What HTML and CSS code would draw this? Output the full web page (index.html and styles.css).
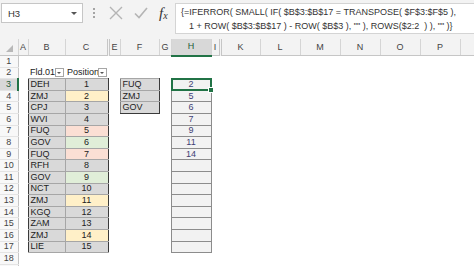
FILE: index.html
```html
<!DOCTYPE html>
<html>
<head>
    <title>Sheet</title>
    <link rel="stylesheet" href="styles.css">
</head>
<body>
    <div class="formula-bar">
        <div class="name-box">
            <span>H3</span>
            <span class="name-arrow"></span>
        </div>
        <svg class="grip" width="20" height="20" viewBox="0 0 20 20">
            <circle cx="10" cy="6" r="1" fill="#8a8a8a"/>
            <circle cx="10" cy="10" r="1" fill="#8a8a8a"/>
            <circle cx="10" cy="14" r="1" fill="#8a8a8a"/>
        </svg>
        <div class="fx-buttons">
            <svg class="btn-x" width="16" height="16" viewBox="0 0 16 16">
                <path d="M2 2 L14 14 M14 2 L2 14" stroke="#b4b4b4" stroke-width="1.4" fill="none"/>
            </svg>
            <svg class="btn-check" width="16" height="16" viewBox="0 0 16 16">
                <path d="M2 8.5 L6 12.5 L14 3" stroke="#b4b4b4" stroke-width="1.6" fill="none"/>
            </svg>
            <span class="fx">f<sub>x</sub></span>
        </div>
        <div class="formula">
            <div>{=IFERROR( SMALL( IF( $B$3:$B$17 = TRANSPOSE( $F$3:$F$5 ),</div>
            <div class="indent">1 + ROW( $B$3:$B$17 ) - ROW( $B$3 ), "" ), ROWS($2:2&nbsp; ) ), "" )}</div>
        </div>
    </div>

    <table class="sheet">
        <colgroup>
            <col style="width:18px"><col style="width:10px"><col style="width:37px"><col style="width:43px">
            <col style="width:12px"><col style="width:39px"><col style="width:12px"><col style="width:40px">
            <col style="width:9px"><col style="width:40px"><col style="width:40px"><col style="width:40px">
            <col style="width:40px"><col style="width:40px"><col style="width:40px"><col style="width:14px">
        </colgroup>
        <tr class="col-head">
            <th class="corner"><span class="tri"></span></th>
            <th>A</th><th>B</th><th>C</th><th class="hid">E</th><th>F</th><th>G</th>
            <th class="on">H</th><th>I</th><th class="hid">K</th><th>L</th><th>M</th>
            <th>N</th><th>O</th><th>P</th><th></th>
        </tr>
        <tr><th class="rn">1</th><td></td><td></td><td></td><td></td><td></td><td></td><td></td><td colspan="8"></td></tr>
        <tr><th class="rn">2</th><td></td>
            <td class="hdr">Fld.01<span class="filter"></span></td>
            <td class="hdr">Position<span class="filter"></span></td>
            <td></td><td></td><td></td><td></td><td colspan="8"></td></tr>
        <tr><th class="rn on">3</th><td></td><td class="fld">DEH</td><td class="pos">1</td><td></td><td class="key">FUQ</td><td></td><td class="out sel">2</td><td colspan="8"></td></tr>
        <tr><th class="rn">4</th><td></td><td class="fld">ZMJ</td><td class="pos y">2</td><td></td><td class="key">ZMJ</td><td></td><td class="out">5</td><td colspan="8"></td></tr>
        <tr><th class="rn">5</th><td></td><td class="fld">CPJ</td><td class="pos">3</td><td></td><td class="key last">GOV</td><td></td><td class="out">6</td><td colspan="8"></td></tr>
        <tr><th class="rn">6</th><td></td><td class="fld">WVI</td><td class="pos">4</td><td></td><td></td><td></td><td class="out">7</td><td colspan="8"></td></tr>
        <tr><th class="rn">7</th><td></td><td class="fld">FUQ</td><td class="pos r">5</td><td></td><td></td><td></td><td class="out">9</td><td colspan="8"></td></tr>
        <tr><th class="rn">8</th><td></td><td class="fld">GOV</td><td class="pos g">6</td><td></td><td></td><td></td><td class="out">11</td><td colspan="8"></td></tr>
        <tr><th class="rn">9</th><td></td><td class="fld">FUQ</td><td class="pos r">7</td><td></td><td></td><td></td><td class="out">14</td><td colspan="8"></td></tr>
        <tr><th class="rn">10</th><td></td><td class="fld">RFH</td><td class="pos">8</td><td></td><td></td><td></td><td class="out"></td><td colspan="8"></td></tr>
        <tr><th class="rn">11</th><td></td><td class="fld">GOV</td><td class="pos g">9</td><td></td><td></td><td></td><td class="out"></td><td colspan="8"></td></tr>
        <tr><th class="rn">12</th><td></td><td class="fld">NCT</td><td class="pos">10</td><td></td><td></td><td></td><td class="out"></td><td colspan="8"></td></tr>
        <tr><th class="rn">13</th><td></td><td class="fld">ZMJ</td><td class="pos y">11</td><td></td><td></td><td></td><td class="out"></td><td colspan="8"></td></tr>
        <tr><th class="rn">14</th><td></td><td class="fld">KGQ</td><td class="pos">12</td><td></td><td></td><td></td><td class="out"></td><td colspan="8"></td></tr>
        <tr><th class="rn">15</th><td></td><td class="fld">ZAM</td><td class="pos">13</td><td></td><td></td><td></td><td class="out"></td><td colspan="8"></td></tr>
        <tr><th class="rn">16</th><td></td><td class="fld">ZMJ</td><td class="pos y">14</td><td></td><td></td><td></td><td class="out"></td><td colspan="8"></td></tr>
        <tr><th class="rn">17</th><td></td><td class="fld last">LIE</td><td class="pos last">15</td><td></td><td></td><td></td><td class="out"></td><td colspan="8"></td></tr>
        <tr><th class="rn">18</th><td></td><td></td><td></td><td></td><td></td><td></td><td></td><td colspan="8"></td></tr>
        <tr><th class="rn"></th><td></td><td></td><td></td><td></td><td></td><td></td><td></td><td colspan="8"></td></tr>
    </table>
</body>
</html>
```

FILE: styles.css
```css
body {
    margin: 0;
    width: 474px;
    height: 266px;
    overflow: hidden;
    background-color: #fff;
    font-family: "Liberation Sans", Arial, sans-serif;
    font-size: 9px;
    color: #262626;
}

/* Formula bar */
.formula-bar {
    display: flex;
    align-items: flex-start;
    height: 39px;
    padding-top: 3px;
    box-sizing: border-box;
    background-color: #f3f3f3;
}

.name-box {
    display: flex;
    align-items: center;
    justify-content: space-between;
    width: 82px;
    height: 20px;
    margin-left: 1px;
    padding: 0 5px 0 6px;
    box-sizing: border-box;
    border: 1px solid #c6c6c6;
    background-color: #fff;
    font-size: 9.5px;
    color: #333;
}

.name-arrow {
    border-top: 3px solid #555;
    border-left: 3px solid transparent;
    border-right: 3px solid transparent;
}

.grip {
    margin-left: 1px;
}

.fx-buttons {
    display: flex;
    align-items: center;
    width: 71px;
    height: 20px;
}

.btn-x {
    margin-left: 4px;
}

.btn-check {
    margin-left: 9px;
}

.fx {
    margin-left: 10px;
    font-family: "Liberation Serif", "Times New Roman", serif;
    font-style: italic;
    font-size: 15px;
    color: #333;
}

.fx sub {
    font-size: 10px;
    vertical-align: -1px;
}

.formula {
    flex: 1;
    height: 31px;
    padding: 1px 5px 0;
    box-sizing: border-box;
    border: 1px solid #d4d4d4;
    border-right: none;
    background-color: #fff;
    line-height: 14px;
    color: #333;
    white-space: nowrap;
    overflow: hidden;
}

.formula .indent {
    padding-left: 8px;
}

/* Sheet grid */
.sheet {
    width: 474px;
    table-layout: fixed;
    border-collapse: collapse;
}

.sheet tr {
    height: 11.6px;
}

.sheet tr.col-head {
    height: 16.5px;
}

.sheet td,
.sheet th {
    padding: 0;
    line-height: 9px;
    font-weight: normal;
    white-space: nowrap;
    overflow: visible;
}

.col-head th {
    background-color: #f3f3f3;
    border-right: 1px solid #d5d5d5;
    border-bottom: 1px solid #c6c6c6;
    text-align: center;
    color: #444;
}

.col-head th.hid {
    border-left: 3px double #c6c6c6;
}

.col-head th.on {
    background-color: #d8d8d8;
    border-bottom: 2px solid #217346;
    color: #1e5b38;
}

.col-head th.corner {
    position: relative;
}

.tri {
    position: absolute;
    right: 5px;
    bottom: 3px;
    border-bottom: 7px solid #b8b8b8;
    border-left: 7px solid transparent;
}

.rn {
    background-color: #f8f8f8;
    border-right: 1px solid #c6c6c6;
    border-bottom: 1px solid #e4e4e4;
    text-align: center;
    color: #444;
}

.rn.on {
    background-color: #d8d8d8;
    border-right: 2px solid #217346;
    color: #1e5b38;
}

.hdr {
    position: relative;
    padding-left: 2px !important;
    color: #222;
}

.filter {
    position: absolute;
    right: 1px;
    top: 1px;
    width: 7px;
    height: 7px;
    border: 1px solid #a6a6a6;
    background-color: #fff;
}

.filter::after {
    content: "";
    position: absolute;
    left: 1px;
    top: 3px;
    border-top: 2.5px solid #555;
    border-left: 2.5px solid transparent;
    border-right: 2.5px solid transparent;
}

.fld,
.pos,
.key {
    background-color: #d9d9d9;
    border: 1px solid #a6a6a6;
    color: #222;
}

.fld,
.key {
    padding-left: 2px !important;
}

.fld {
    border-left: 1px solid #3a3a3a;
}

.pos {
    border-right: 1px solid #3a3a3a;
    text-align: center;
}

.pos.y {
    background-color: #fff0c8;
}

.pos.r {
    background-color: #fbdfd4;
}

.pos.g {
    background-color: #e0eed8;
}

.key {
    border-right: 1px solid #3a3a3a;
    border-left: 1px solid #7f7f7f;
}

.key.last {
    border-bottom: 1px solid #3a3a3a;
}

.out {
    background-color: #f2f2f2;
    border: 1px solid #8c8c8c;
    text-align: center;
    color: #3f3f76;
}

.sel {
    position: relative;
}

.sel::after {
    content: "";
    position: absolute;
    left: -1px;
    top: -1px;
    right: -1px;
    bottom: -1px;
    border: 2px solid #217346;
}

.sel::before {
    content: "";
    position: absolute;
    right: -3px;
    bottom: -3px;
    width: 4px;
    height: 4px;
    background-color: #217346;
    border: 1px solid #fff;
    z-index: 1;
}
```
